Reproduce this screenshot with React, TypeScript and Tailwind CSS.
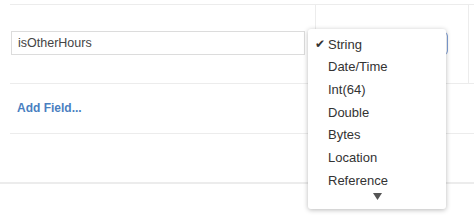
const TYPES = ["String", "Date/Time", "Int(64)", "Double", "Bytes", "Location", "Reference"];

export default function App() {
  return (
    <div className="relative h-[217px] w-[474px] overflow-hidden bg-white font-['Liberation_Sans',Arial,sans-serif]">
      <div className="pt-[4px]">
        <div className="ml-[10px] flex h-[80px] border-t border-b border-[#ececec]">
          <div className="flex w-[305px] items-center pb-[2px] pl-[1px]">
            <div className="flex h-[24px] w-[294px] items-center border border-[#dcdcdc] px-[6px] text-[12.5px] text-[#444]">
              isOtherHours
            </div>
          </div>
          <div className="flex w-[154px] items-center border-l border-r border-[#ececec] pb-[2px] pl-[6px]">
            <div className="h-[23px] w-[126px] rounded-[4px] border border-[#7f9fd6]" />
          </div>
        </div>
        <div className="ml-[10px] flex h-[50px] items-center border-b border-[#ececec] pl-[7px] pb-[2px]">
          <span className="text-[12px] font-bold text-[#4a7fc1]">Add Field...</span>
        </div>
        <div className="h-[50px] border-b-2 border-[#ececec]" />
      </div>

      <div className="absolute left-[308px] top-[29px] w-[138px] rounded-[3px] bg-white pt-[4px] pb-[3px] shadow-[0_1px_5px_rgba(0,0,0,0.28)]">
        {TYPES.map((t, i) => (
          <div key={t} className="flex h-[22.7px] items-center text-[13px] text-[#333]">
            <span className="w-[20px] pl-[7px] text-[12px]">{i === 0 ? "✔" : ""}</span>
            <span>{t}</span>
          </div>
        ))}
        <div className="flex h-[14px] items-start justify-center">
          <svg width="9" height="7" viewBox="0 0 9 7" className="mt-[1px]">
            <path d="M0 0h9L4.5 7z" fill="#555" />
          </svg>
        </div>
      </div>
    </div>
  );
}
